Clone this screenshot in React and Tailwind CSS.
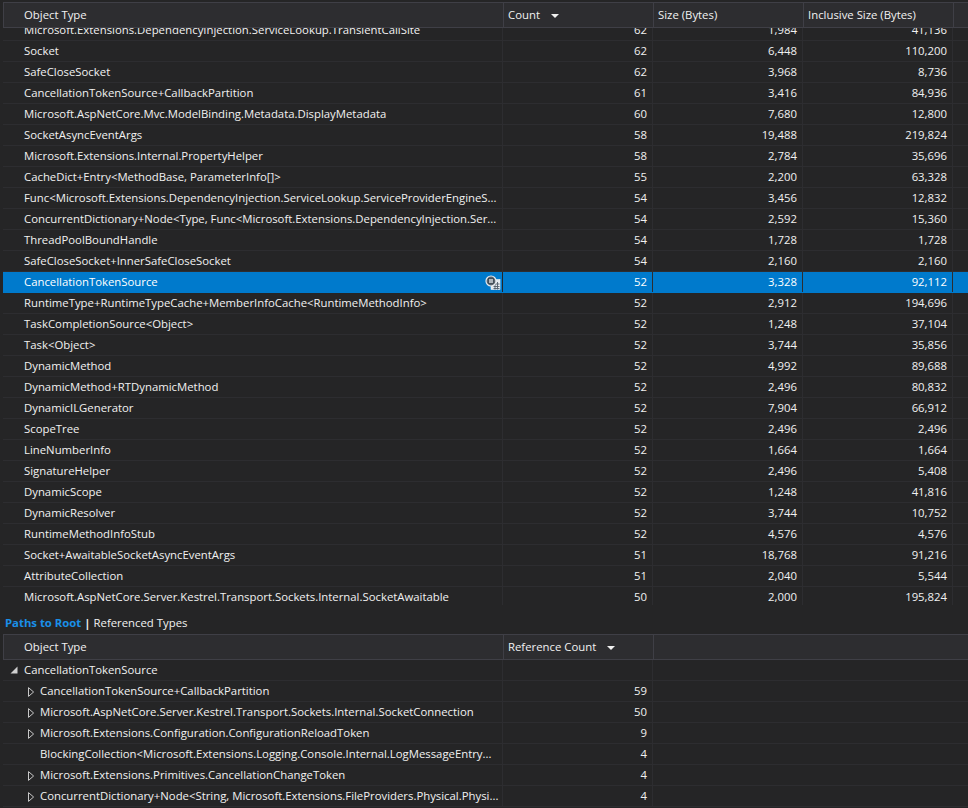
const rows = [
  ["Microsoft.Extensions.DependencyInjection.ServiceLookup.TransientCallSite","62","1,984","41,136"],
  ["Socket","62","6,448","110,200"],
  ["SafeCloseSocket","62","3,968","8,736"],
  ["CancellationTokenSource+CallbackPartition","61","3,416","84,936"],
  ["Microsoft.AspNetCore.Mvc.ModelBinding.Metadata.DisplayMetadata","60","7,680","12,800"],
  ["SocketAsyncEventArgs","58","19,488","219,824"],
  ["Microsoft.Extensions.Internal.PropertyHelper","58","2,784","35,696"],
  ["CacheDict+Entry<MethodBase, ParameterInfo[]>","55","2,200","63,328"],
  ["Func<Microsoft.Extensions.DependencyInjection.ServiceLookup.ServiceProviderEngineS...","54","3,456","12,832"],
  ["ConcurrentDictionary+Node<Type, Func<Microsoft.Extensions.DependencyInjection.Ser...","54","2,592","15,360"],
  ["ThreadPoolBoundHandle","54","1,728","1,728"],
  ["SafeCloseSocket+InnerSafeCloseSocket","54","2,160","2,160"],
  ["CancellationTokenSource","52","3,328","92,112"],
  ["RuntimeType+RuntimeTypeCache+MemberInfoCache<RuntimeMethodInfo>","52","2,912","194,696"],
  ["TaskCompletionSource<Object>","52","1,248","37,104"],
  ["Task<Object>","52","3,744","35,856"],
  ["DynamicMethod","52","4,992","89,688"],
  ["DynamicMethod+RTDynamicMethod","52","2,496","80,832"],
  ["DynamicILGenerator","52","7,904","66,912"],
  ["ScopeTree","52","2,496","2,496"],
  ["LineNumberInfo","52","1,664","1,664"],
  ["SignatureHelper","52","2,496","5,408"],
  ["DynamicScope","52","1,248","41,816"],
  ["DynamicResolver","52","3,744","10,752"],
  ["RuntimeMethodInfoStub","52","4,576","4,576"],
  ["Socket+AwaitableSocketAsyncEventArgs","51","18,768","91,216"],
  ["AttributeCollection","51","2,040","5,544"],
  ["Microsoft.AspNetCore.Server.Kestrel.Transport.Sockets.Internal.SocketAwaitable","50","2,000","195,824"],
];
const refs = [
  ["CancellationTokenSource+CallbackPartition","59",true],
  ["Microsoft.AspNetCore.Server.Kestrel.Transport.Sockets.Internal.SocketConnection","50",true],
  ["Microsoft.Extensions.Configuration.ConfigurationReloadToken","9",true],
  ["BlockingCollection<Microsoft.Extensions.Logging.Console.Internal.LogMessageEntry...","4",false],
  ["Microsoft.Extensions.Primitives.CancellationChangeToken","4",true],
  ["ConcurrentDictionary+Node<String, Microsoft.Extensions.FileProviders.Physical.Physi...","4",true],
];

function SortArrow() {
  return (
    <svg width="8" height="4" viewBox="0 0 8 4" className="ml-[11px] mt-[1px]">
      <path d="M0 0H8L4 4Z" fill="#f1f1f1" />
    </svg>
  );
}
function Collapsed() {
  return (
    <svg width="7" height="10" viewBox="0 0 7 10" className="absolute left-[25px] top-[6px]">
      <path d="M0.5 0.6L5.6 5L0.5 9.4Z" fill="none" stroke="#c8c8c8" strokeWidth="1" />
    </svg>
  );
}
function Expanded() {
  return (
    <svg width="8" height="8" viewBox="0 0 8 8" className="absolute left-[7px] top-[6px]">
      <path d="M7.5 0.5V7.5H0.5Z" fill="#d0d0d0" />
    </svg>
  );
}
function InstanceIcon() {
  return (
    <svg width="16" height="16" viewBox="0 0 16 16" className="absolute left-[482px] top-[3px]">
      <rect x="6" y="4.5" width="9" height="10" fill="#e4eaef" stroke="#f4f4f4" strokeWidth="0.6" />
      <path d="M8.5 9h6M8.5 11.5h6M8.5 13.5h6M10 7v7.5M12.5 7v7.5" stroke="#52606c" strokeWidth="0.9" />
      <circle cx="6" cy="6" r="5" fill="#58636d" stroke="#e6ebef" strokeWidth="1.2" />
      <rect x="3.6" y="3.6" width="4.8" height="4.8" fill="#aeb6bd" stroke="#2e3a44" strokeWidth="0.7" />
    </svg>
  );
}
function Head({ className = "", children }) {
  return <div className={`flex items-center h-full border-r border-[#3f3f46] shrink-0 ${className}`}>{children}</div>;
}
function Cell({ w, children }) {
  return <div className={`h-full shrink-0 border-r border-[#2d2d30] text-right pr-[5px] ${w}`}>{children}</div>;
}

export default function App() {
  return (
    <div className="w-[968px] h-[808px] overflow-hidden bg-[#252526] text-[11.35px] leading-[20px] text-[#f1f1f1] font-['Open_Sans','Noto_Sans',sans-serif] pt-[2px]">
      <div className="flex h-[26px] ml-[3px] bg-[#2d2d30] border-y border-[#3f3f46] border-l">
        <Head className="w-[500px] pl-[20px]">Object Type</Head>
        <Head className="w-[150px] pl-[4px]">Count<SortArrow /></Head>
        <Head className="w-[150px] pl-[4px]">Size (Bytes)</Head>
        <Head className="w-[150px] pl-[4px]">Inclusive Size (Bytes)</Head>
      </div>
      <div className="h-[577px] overflow-hidden">
        <div className="-mt-[8px]">
          {rows.map((r, i) => {
            const sel = r[0] === "CancellationTokenSource";
            return (
              <div key={i} className={`relative flex h-[21px] ml-[3px] border-b ${sel ? "bg-[#007acc] border-[#007acc] text-white" : "border-[#2d2d30]"}`}>
                <div className={`h-full w-[500px] shrink-0 pl-[21px] truncate border-r ${sel ? "border-[#252526]" : "border-[#2d2d30]"}`}>{r[0]}</div>
                {sel && <InstanceIcon />}
                <Cell w="w-[150px]">{r[1]}</Cell>
                <Cell w="w-[150px]">{r[2]}</Cell>
                <Cell w="w-[150px]">{r[3]}</Cell>
              </div>
            );
          })}
        </div>
      </div>
      <div className="h-[23px] flex items-center pl-[5px] mt-[6px]">
        <span className="font-bold text-[#1a8fe8]">Paths to Root</span>
        <span className="mx-[3px] font-bold">|</span>
        <span>Referenced Types</span>
      </div>
      <div className="flex h-[26px] ml-[3px] bg-[#2d2d30] border-y border-[#3f3f46] border-l">
        <Head className="w-[500px] pl-[20px]">Object Type</Head>
        <Head className="w-[150px] pl-[4px]">Reference Count<SortArrow /></Head>
      </div>
      <div className="relative flex h-[21px] ml-[3px] border-b border-[#2d2d30]">
        <Expanded />
        <div className="w-[500px] shrink-0 pl-[21px] border-r border-[#2d2d30]">CancellationTokenSource</div>
        <Cell w="w-[150px]" />
      </div>
      {refs.map((r, i) => (
        <div key={i} className="relative flex h-[21px] ml-[3px] border-b border-[#2d2d30]">
          {r[2] && <Collapsed />}
          <div className="w-[500px] shrink-0 pl-[37px] truncate border-r border-[#2d2d30]">{r[0]}</div>
          <Cell w="w-[150px]">{r[1]}</Cell>
        </div>
      ))}
    </div>
  );
}
